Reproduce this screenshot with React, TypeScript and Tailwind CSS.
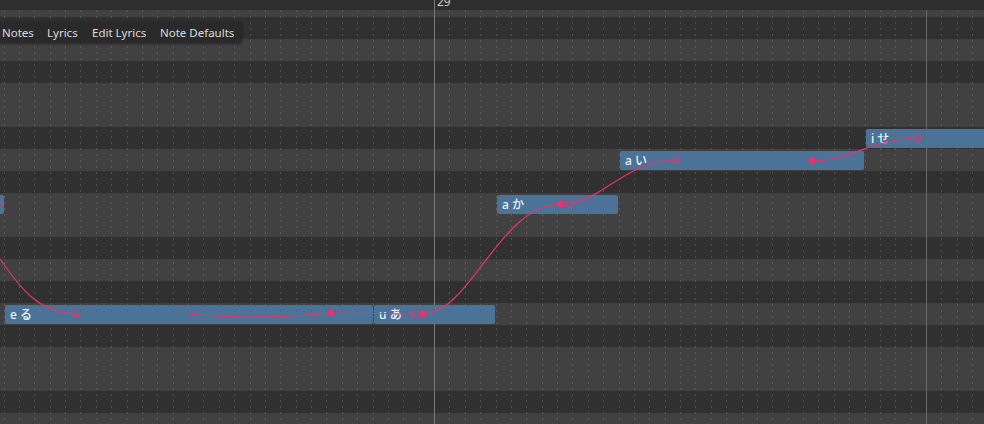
const LIGHT = "bg-[#414141]";
const DARK = "bg-[#303030]";

// piano rows from the top of the canvas; the first is cut by the timeline
const rows: ("L" | "D")[] = [
  "L", "D", "L", "D", "L", "L", "D", "L", "D", "L",
  "L", "D", "L", "D", "L", "D", "L", "L", "D", "L",
];

const notes = [
  { x: -10, w: 14, y: 195, lyric: "" },
  { x: 5, w: 368, y: 305, lyric: "e る" },
  { x: 374, w: 121, y: 305, lyric: "u あ" },
  { x: 497, w: 121, y: 195, lyric: "a か" },
  { x: 620, w: 244, y: 151, lyric: "a い" },
  { x: 866, w: 200, y: 129, lyric: "i せ" },
];

const PINK = "#e8336f";
const SNAP = 15.375;

function Grid() {
  const cols: number[] = [];
  for (let k = 0; k < 64; k++) {
    if (k === 28 || k === 60) continue;
    cols.push(Math.round(3.5 + k * SNAP) + 0.5);
  }
  return (
    <svg className="pointer-events-none absolute inset-0" width={984} height={424}>
      {cols.map((x) => (
        <line
          key={x}
          x1={x}
          x2={x}
          y1={10}
          y2={424}
          stroke="white"
          strokeOpacity={0.16}
          strokeDasharray="2 4"
        />
      ))}
      <line x1={434.5} x2={434.5} y1={0} y2={424} stroke="#7a7a7a" />
      <line x1={926.5} x2={926.5} y1={10} y2={424} stroke="#6a6a6a" />
    </svg>
  );
}

function Hollow({ x, y }: { x: number; y: number }) {
  return <circle cx={x} cy={y} r={3} fill="none" stroke={PINK} strokeWidth={1.2} />;
}

function Dot({ x, y }: { x: number; y: number }) {
  return <circle cx={x} cy={y} r={3.5} fill={PINK} />;
}

function PitchCurves() {
  const line = { fill: "none", stroke: PINK, strokeWidth: 1.2 };
  return (
    <svg className="pointer-events-none absolute inset-0" width={984} height={424}>
      <path d="M -10 204 L 4 204" {...line} />
      <path d="M -77 204 C 0 204, 0 314, 77 314" {...line} />
      <Hollow x={77} y={314} />
      <path d="M 188 314 C 230 318, 280 318, 331 313 L 412 314" {...line} />
      <Dot x={331} y={313} />
      <Hollow x={415} y={314} />
      <path d="M 423 314 C 470 314, 500 204, 561 204 L 566 204" {...line} />
      <Dot x={423} y={314} />
      <Dot x={561} y={204} />
      <path d="M 572 203 C 600 200, 630 160, 674 160" {...line} />
      <Hollow x={569} y={204} />
      <Hollow x={677} y={160} />
      <path d="M 812 161 C 850 161, 870 140, 915 138" {...line} />
      <Dot x={812} y={161} />
      <Hollow x={918} y={138} />
    </svg>
  );
}

export default function App() {
  return (
    <div
      className="relative h-[424px] w-[984px] overflow-hidden bg-[#303030] text-[12px]"
      style={{ fontFamily: '"Noto Sans", "Noto Sans CJK JP", sans-serif' }}
    >
      <div className="relative h-[10px] bg-[#2e2e2e]">
        <span className="absolute left-[437px] top-[-4px] leading-none text-[#c8c8c8]">29</span>
      </div>

      <div className="flex flex-col">
        {rows.map((r, i) => (
          <div key={i} className={`${i === 0 ? "h-[7px]" : "h-[22px]"} ${r === "L" ? LIGHT : DARK}`} />
        ))}
      </div>

      <Grid />

      {notes.map((n) => (
        <div
          key={n.x}
          className="absolute flex h-[19px] items-center rounded-[2px] bg-[#4a7397] pl-[5px] font-medium text-[#eef3f7]"
          style={{ left: n.x, top: n.y, width: n.w }}
        >
          {n.lyric}
        </div>
      ))}

      <PitchCurves />

      <div className="absolute left-0 top-[21px] flex h-[22px] w-[241px] items-center rounded-br-[3px] bg-[#2a2a2a] pt-[1px] text-[11.5px] text-[#dcdcdc] shadow-[1px_1px_3px_rgba(0,0,0,0.35)]">
        <span className="w-[47px] pl-[2px]">Notes</span>
        <span className="w-[45px]">Lyrics</span>
        <span className="w-[68px]">Edit Lyrics</span>
        <span>Note Defaults</span>
      </div>
    </div>
  );
}
